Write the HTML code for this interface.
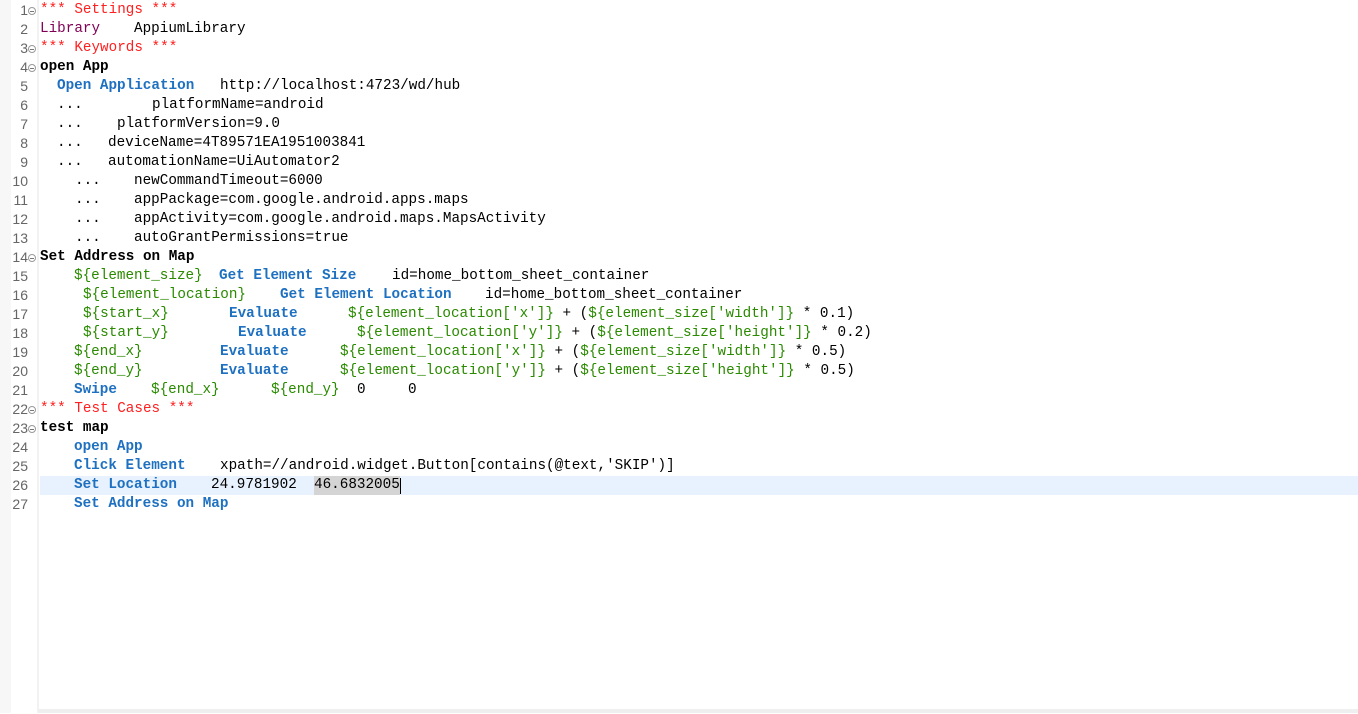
<!DOCTYPE html>
<html><head><meta charset="utf-8"><style>
body{margin:0;width:1358px;height:713px;background:#fff;position:relative;overflow:hidden;font-family:"Liberation Mono",monospace;font-size:14.3px}
.g1{position:absolute;left:0;top:0;width:11px;height:713px;background:#f7f7f7}
.g2{position:absolute;left:37px;top:0;width:2px;height:713px;background:#f2f2f2}
.bb{position:absolute;left:38px;top:709px;right:0;height:4px;background:#efefef}
.w{position:absolute;left:0;top:1px;width:1358px;height:713px}
.l{position:absolute;left:0;height:19px;line-height:19px;width:1358px;white-space:pre}
.n{position:absolute;left:0;width:28px;text-align:right;color:#666;font-family:"Liberation Sans",sans-serif;font-size:14px}
.f{position:absolute;left:28px;top:6px;width:6px;height:6px;border:1px solid #999;border-radius:50%}
.f:after{content:"";position:absolute;left:1px;top:2.5px;width:4px;height:1px;background:#777}
.l span{position:absolute;top:0}
.r{color:#ff2020}.p{color:#7f0055}.k{color:#000;font-weight:bold}.b{color:#1e70c0;font-weight:bold}.v{color:#2a8a00}.t{color:#000}
.hl{position:absolute;left:40px;right:0;top:475px;height:19px;background:#e8f2fe}
.sel{background:#d4d4d4}
</style></head><body>
<div class="g1"></div><div class="g2"></div><div class="bb"></div>
<div class="w">
<div class="hl"></div>
<div class="l" style="top:0"><div class="n">1</div><div class="f"></div><span class="r" style="left:40px">*** Settings ***</span></div>
<div class="l" style="top:19px"><div class="n">2</div><span class="p" style="left:40px">Library</span><span class="t" style="left:134px">AppiumLibrary</span></div>
<div class="l" style="top:38px"><div class="n">3</div><div class="f"></div><span class="r" style="left:40px">*** Keywords ***</span></div>
<div class="l" style="top:57px"><div class="n">4</div><div class="f"></div><span class="k" style="left:40px">open App</span></div>
<div class="l" style="top:76px"><div class="n">5</div><span class="b" style="left:57px">Open Application</span><span class="t" style="left:220px">http://localhost:4723/wd/hub</span></div>
<div class="l" style="top:95px"><div class="n">6</div><span class="t" style="left:57px">...</span><span class="t" style="left:152px">platformName=android</span></div>
<div class="l" style="top:114px"><div class="n">7</div><span class="t" style="left:57px">...</span><span class="t" style="left:117px">platformVersion=9.0</span></div>
<div class="l" style="top:133px"><div class="n">8</div><span class="t" style="left:57px">...</span><span class="t" style="left:108px">deviceName=4T89571EA1951003841</span></div>
<div class="l" style="top:152px"><div class="n">9</div><span class="t" style="left:57px">...</span><span class="t" style="left:108px">automationName=UiAutomator2</span></div>
<div class="l" style="top:171px"><div class="n">10</div><span class="t" style="left:75px">...</span><span class="t" style="left:134px">newCommandTimeout=6000</span></div>
<div class="l" style="top:190px"><div class="n">11</div><span class="t" style="left:75px">...</span><span class="t" style="left:134px">appPackage=com.google.android.apps.maps</span></div>
<div class="l" style="top:209px"><div class="n">12</div><span class="t" style="left:75px">...</span><span class="t" style="left:134px">appActivity=com.google.android.maps.MapsActivity</span></div>
<div class="l" style="top:228px"><div class="n">13</div><span class="t" style="left:75px">...</span><span class="t" style="left:134px">autoGrantPermissions=true</span></div>
<div class="l" style="top:247px"><div class="n">14</div><div class="f"></div><span class="k" style="left:40px">Set Address on Map</span></div>
<div class="l" style="top:266px"><div class="n">15</div><span class="v" style="left:74px">${element_size}</span><span class="b" style="left:219px">Get Element Size</span><span class="t" style="left:392px">id=home_bottom_sheet_container</span></div>
<div class="l" style="top:285px"><div class="n">16</div><span class="v" style="left:83px">${element_location}</span><span class="b" style="left:280px">Get Element Location</span><span class="t" style="left:485px">id=home_bottom_sheet_container</span></div>
<div class="l" style="top:304px"><div class="n">17</div><span class="v" style="left:83px">${start_x}</span><span class="b" style="left:229px">Evaluate</span><span class="t" style="left:348px"><span class="v" style="position:static">${element_location['x']}</span> + (<span class="v" style="position:static">${element_size['width']}</span> * 0.1)</span></div>
<div class="l" style="top:323px"><div class="n">18</div><span class="v" style="left:83px">${start_y}</span><span class="b" style="left:238px">Evaluate</span><span class="t" style="left:357px"><span class="v" style="position:static">${element_location['y']}</span> + (<span class="v" style="position:static">${element_size['height']}</span> * 0.2)</span></div>
<div class="l" style="top:342px"><div class="n">19</div><span class="v" style="left:74px">${end_x}</span><span class="b" style="left:220px">Evaluate</span><span class="t" style="left:340px"><span class="v" style="position:static">${element_location['x']}</span> + (<span class="v" style="position:static">${element_size['width']}</span> * 0.5)</span></div>
<div class="l" style="top:361px"><div class="n">20</div><span class="v" style="left:74px">${end_y}</span><span class="b" style="left:220px">Evaluate</span><span class="t" style="left:340px"><span class="v" style="position:static">${element_location['y']}</span> + (<span class="v" style="position:static">${element_size['height']}</span> * 0.5)</span></div>
<div class="l" style="top:380px"><div class="n">21</div><span class="b" style="left:74px">Swipe</span><span class="v" style="left:151px">${end_x}</span><span class="v" style="left:271px">${end_y}</span><span class="t" style="left:357px">0</span><span class="t" style="left:408px">0</span></div>
<div class="l" style="top:399px"><div class="n">22</div><div class="f"></div><span class="r" style="left:40px">*** Test Cases ***</span></div>
<div class="l" style="top:418px"><div class="n">23</div><div class="f"></div><span class="k" style="left:40px">test map</span></div>
<div class="l" style="top:437px"><div class="n">24</div><span class="b" style="left:74px">open App</span></div>
<div class="l" style="top:456px"><div class="n">25</div><span class="b" style="left:74px">Click Element</span><span class="t" style="left:220px">xpath=//android.widget.Button[contains(@text,'SKIP')]</span></div>
<div class="l" style="top:475px"><div class="n">26</div><span class="b" style="left:74px">Set Location</span><span class="t" style="left:211px">24.9781902</span><span class="t sel" style="left:314px">46.6832005</span><span style="left:400px;top:2px;width:1px;height:16px;background:#000"></span></div>
<div class="l" style="top:494px"><div class="n">27</div><span class="b" style="left:74px">Set Address on Map</span></div>
</div>
</body></html>
